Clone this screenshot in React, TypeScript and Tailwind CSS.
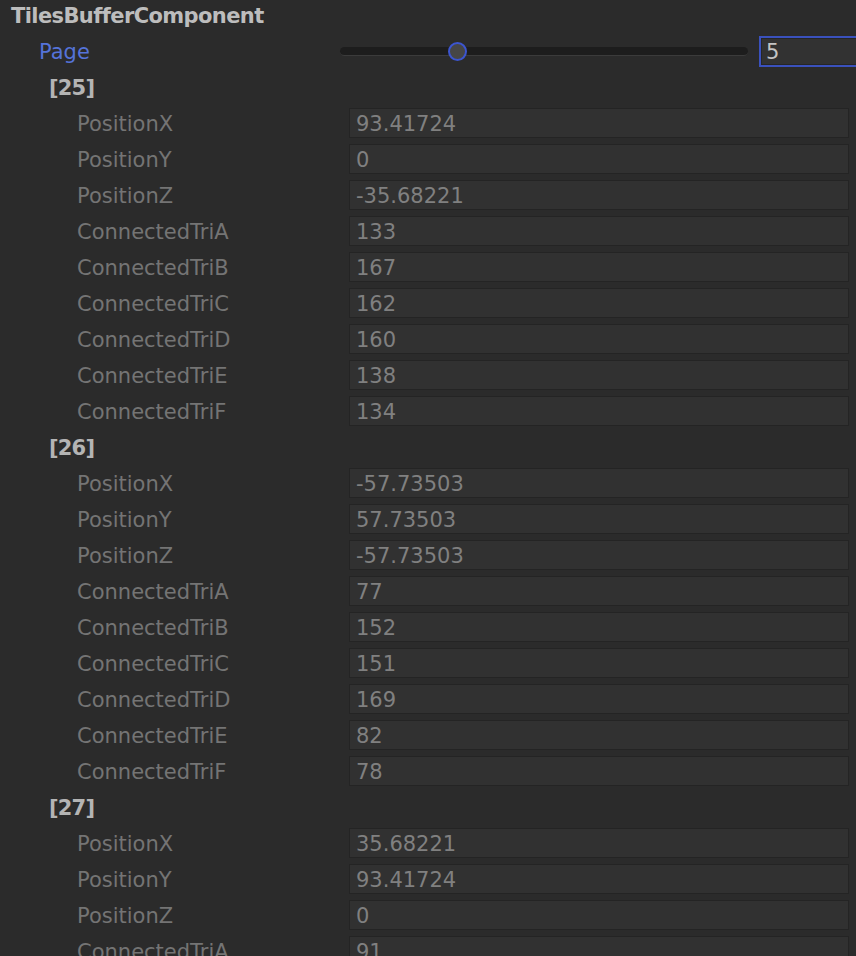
import React from 'react'

type Tile = {
  index: number
  values: string[]
}

const fieldNames = [
  'PositionX',
  'PositionY',
  'PositionZ',
  'ConnectedTriA',
  'ConnectedTriB',
  'ConnectedTriC',
  'ConnectedTriD',
  'ConnectedTriE',
  'ConnectedTriF',
]

const tiles: Tile[] = [
  { index: 25, values: ['93.41724', '0', '-35.68221', '133', '167', '162', '160', '138', '134'] },
  { index: 26, values: ['-57.73503', '57.73503', '-57.73503', '77', '152', '151', '169', '82', '78'] },
  { index: 27, values: ['35.68221', '93.41724', '0', '91', '', '', '', '', ''] },
]

const font = { fontFamily: '"DejaVu Sans", "Liberation Sans", sans-serif' }

function FieldRow({ label, value }: { label: string; value: string }) {
  return (
    <div className="flex h-[36px] items-center">
      <div className="w-[349px] shrink-0 pl-[77px] pt-[2px] text-[21px] text-[#747474]">{label}</div>
      <div className="flex h-[30px] w-[500px] items-center border border-[#242424] bg-[#313131] pl-[6px] pt-[2px] text-[21px] text-[#808080]">
        {value}
      </div>
    </div>
  )
}

function PageRow() {
  const percent = 0.288
  return (
    <div className="flex h-[36px] items-center">
      <div className="w-[340px] shrink-0 pl-[39px] pt-[2px] text-[21px] text-[#5573d9]">Page</div>
      <div className="relative h-[36px] w-[408px] shrink-0">
        <div className="absolute left-0 right-0 top-[14px] h-[9px] rounded-full border-b border-[#3b3b3b] bg-[#1d1d1d]" />
        <div
          className="absolute top-[9px] h-[19px] w-[19px] rounded-full border-2 border-[#3c55cf] bg-[#464646]"
          style={{ left: `${percent * 408 - 9.5}px` }}
        />
      </div>
      <div className="ml-[11px] flex h-[31px] w-[120px] shrink-0 items-center border-2 border-[#3a51bd] bg-[#323232] pl-[5px] pt-[2px] text-[21px] text-[#c4c4c4] shadow-[inset_0_0_0_1px_#262626]">
        5
      </div>
    </div>
  )
}

export default function App() {
  return (
    <div className="h-[956px] w-[856px] overflow-hidden bg-[#2b2b2b] leading-none" style={font}>
      <div className="flex h-[30px] items-center pl-[11px] pt-[2px] text-[21px] font-bold tracking-[-0.6px] text-[#bdbdbd]">
        TilesBufferComponent
      </div>
      <div className="mt-[3px]">
        <PageRow />
        {tiles.map((tile) => (
          <div key={tile.index}>
            <div className="flex h-[36px] items-center pl-[49px] pt-[2px] text-[21px] font-bold tracking-[-0.8px] text-[#b4b4b4]">
              [{tile.index}]
            </div>
            {fieldNames.map((name, i) => (
              <FieldRow key={name} label={name} value={tile.values[i]} />
            ))}
          </div>
        ))}
      </div>
    </div>
  )
}
